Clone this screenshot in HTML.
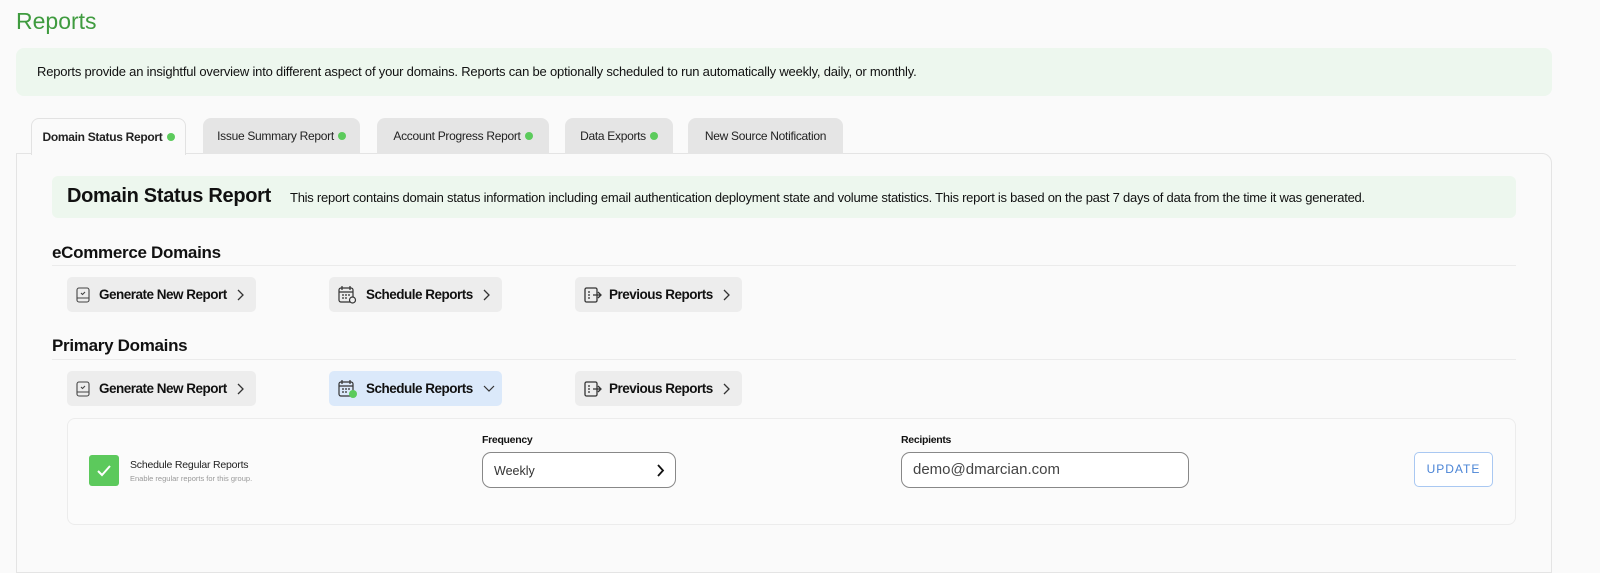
<!DOCTYPE html>
<html><head><style>
*{box-sizing:border-box;margin:0;padding:0}
body{width:1600px;height:554px;background:#fafafa;font-family:"Liberation Sans",sans-serif;color:#111;position:relative;overflow:hidden}
.a{position:absolute}
.title{left:16px;top:8px;font-size:23px;color:#3f9b3f}
.ban{left:16px;top:48px;width:1536px;height:48px;background:#edf7ee;border-radius:8px;font-size:13px;line-height:48px;padding-left:21px;letter-spacing:-0.2px}
.tab{top:118px;height:36px;background:#e5e5e5;border-radius:8px 8px 0 0;font-size:12px;line-height:36px;text-align:center;letter-spacing:-0.3px;color:#222}
.tab.act{background:#fafafa;border:1px solid #e2e2e2;border-bottom:none;font-weight:bold;height:37px;z-index:2}
.dot{display:inline-block;width:8px;height:8px;border-radius:50%;background:#5ccb5c;margin-left:4px}
.panel{left:16px;top:153px;width:1536px;height:420px;border:1px solid #e4e4e4;border-radius:0 10px 0 0;background:#fafafa}
.ib{left:52px;top:176px;width:1464px;height:42px;background:#edf7ee;border-radius:6px}
.ib b{position:absolute;left:15px;top:9px;font-size:20px;letter-spacing:-0.3px}
.ib span{position:absolute;left:238px;top:14px;font-size:13px;letter-spacing:-0.25px}
.h{left:52px;font-size:17px;font-weight:bold;letter-spacing:-0.3px}
.ln{left:52px;width:1464px;height:1px;background:#ebebeb}
.btn{height:35px;background:#ededed;border-radius:5px;font-size:13.5px;font-weight:bold;letter-spacing:-0.5px;display:flex;align-items:center;padding-left:9px;white-space:nowrap}
.btn svg{flex:none}
.btn .t{margin:0 10px 0 9px}
.card{left:67px;top:418px;width:1449px;height:107px;border:1px solid #ececec;border-radius:8px;background:#fbfbfb}
.fld{height:36px;border:1px solid #888;border-radius:9px;background:#fff}
</style></head><body>
<div class="a title">Reports</div>
<div class="a ban">Reports provide an insightful overview into different aspect of your domains. Reports can be optionally scheduled to run automatically weekly, daily, or monthly.</div>
<div class="a panel"></div>
<div class="a tab act" style="left:31px;width:155px">Domain Status Report<span class="dot"></span></div>
<div class="a tab" style="left:203px;width:157px">Issue Summary Report<span class="dot"></span></div>
<div class="a tab" style="left:377px;width:172px">Account Progress Report<span class="dot"></span></div>
<div class="a tab" style="left:565px;width:108px">Data Exports<span class="dot"></span></div>
<div class="a tab" style="left:688px;width:155px">New Source Notification</div>
<div class="a ib"><b>Domain Status Report</b><span>This report contains domain status information including email authentication deployment state and volume statistics. This report is based on the past 7 days of data from the time it was generated.</span></div>

<div class="a h" style="top:243px">eCommerce Domains</div>
<div class="a ln" style="top:265px"></div>
<div class="a h" style="top:336px">Primary Domains</div>
<div class="a ln" style="top:359px"></div>

<!-- row 1 -->
<div class="a btn" style="left:67px;top:277px;width:189px"><svg width="14" height="16" viewBox="0 0 14 16" fill="none" stroke="#444" stroke-width="1.1"><rect x="1" y="1" width="12" height="14" rx="2"/><path d="M1 11h12M5 6l1.5 1.5L9 5"/></svg><span class="t">Generate New Report</span><svg width="8" height="12" viewBox="0 0 8 12" fill="none" stroke="#333" stroke-width="1.3"><path d="M1 1l5 5-5 5"/></svg></div>
<div class="a btn" style="left:329px;top:277px;width:173px"><svg width="19" height="19" viewBox="0 0 19 19" fill="none" stroke="#333" stroke-width="1.2"><rect x="1" y="3" width="14" height="14" rx="2"/><path d="M1 7h14M4 1v4M12 1v4M4 10h2M7 10h2M10 10h2M4 13h2M7 13h2"/><circle cx="14.5" cy="15" r="3" fill="#eee"/></svg><span class="t">Schedule Reports</span><svg width="8" height="12" viewBox="0 0 8 12" fill="none" stroke="#333" stroke-width="1.3"><path d="M1 1l5 5-5 5"/></svg></div>
<div class="a btn" style="left:575px;top:277px;width:167px"><svg width="18" height="16" viewBox="0 0 18 16" fill="none" stroke="#333" stroke-width="1.3"><rect x="1" y="1" width="12" height="14" rx="1.5"/><path d="M4 5h2M4 8h2M4 11h2M9 8h8M14 5l3 3-3 3"/></svg><span class="t" style="margin-left:7px">Previous Reports</span><svg width="8" height="12" viewBox="0 0 8 12" fill="none" stroke="#333" stroke-width="1.3"><path d="M1 1l5 5-5 5"/></svg></div>

<!-- row 2 -->
<div class="a btn" style="left:67px;top:371px;width:189px"><svg width="14" height="16" viewBox="0 0 14 16" fill="none" stroke="#444" stroke-width="1.1"><rect x="1" y="1" width="12" height="14" rx="2"/><path d="M1 11h12M5 6l1.5 1.5L9 5"/></svg><span class="t">Generate New Report</span><svg width="8" height="12" viewBox="0 0 8 12" fill="none" stroke="#333" stroke-width="1.3"><path d="M1 1l5 5-5 5"/></svg></div>
<div class="a btn" style="left:329px;top:371px;width:173px;background:#dbe9fa"><svg width="20" height="20" viewBox="0 0 20 20" fill="none" stroke="#333" stroke-width="1.2"><rect x="1" y="3" width="14" height="14" rx="2"/><path d="M1 7h14M4 1v4M12 1v4M4 10h2M7 10h2M10 10h2M4 13h2M7 13h2"/><circle cx="15" cy="15" r="4" fill="#5ccb5c" stroke="none"/></svg><span class="t" style="margin-left:8px">Schedule Reports</span><svg width="12" height="8" viewBox="0 0 12 8" fill="none" stroke="#333" stroke-width="1.2"><path d="M1 1l5 5 5-5"/></svg></div>
<div class="a btn" style="left:575px;top:371px;width:167px"><svg width="18" height="16" viewBox="0 0 18 16" fill="none" stroke="#333" stroke-width="1.3"><rect x="1" y="1" width="12" height="14" rx="1.5"/><path d="M4 5h2M4 8h2M4 11h2M9 8h8M14 5l3 3-3 3"/></svg><span class="t" style="margin-left:7px">Previous Reports</span><svg width="8" height="12" viewBox="0 0 8 12" fill="none" stroke="#333" stroke-width="1.3"><path d="M1 1l5 5-5 5"/></svg></div>

<div class="a card"></div>
<div class="a" style="left:89px;top:455px;width:30px;height:31px;background:#5cc95c;border-radius:3px"><svg width="30" height="31" viewBox="0 0 30 31" fill="none" stroke="#fff" stroke-width="2"><path d="M9 16l4 4 8-9"/></svg></div>
<div class="a" style="left:130px;top:459px;font-size:10.5px;letter-spacing:-0.2px;color:#222">Schedule Regular Reports</div>
<div class="a" style="left:130px;top:474px;font-size:7.5px;color:#999">Enable regular reports for this group.</div>
<div class="a" style="left:482px;top:434px;font-size:10.5px;font-weight:bold;letter-spacing:-0.3px">Frequency</div>
<div class="a fld" style="left:482px;top:452px;width:194px"><span class="a" style="left:11px;top:11px;font-size:12.5px;color:#333">Weekly</span><svg class="a" style="left:174px;top:11px" width="8" height="13" viewBox="0 0 8 13" fill="none" stroke="#111" stroke-width="1.8"><path d="M1 1l5 5.5-5 5.5"/></svg></div>
<div class="a" style="left:901px;top:434px;font-size:10.5px;font-weight:bold;letter-spacing:-0.3px">Recipients</div>
<div class="a fld" style="left:901px;top:452px;width:288px"><span class="a" style="left:11px;top:8px;font-size:15px;color:#444">demo@dmarcian.com</span></div>
<div class="a" style="left:1414px;top:452px;width:79px;height:35px;border:1px solid #a9c8f2;border-radius:5px;background:#fff;color:#4a84d6;font-size:12px;letter-spacing:1px;text-align:center;line-height:33px">UPDATE</div>
</body></html>
